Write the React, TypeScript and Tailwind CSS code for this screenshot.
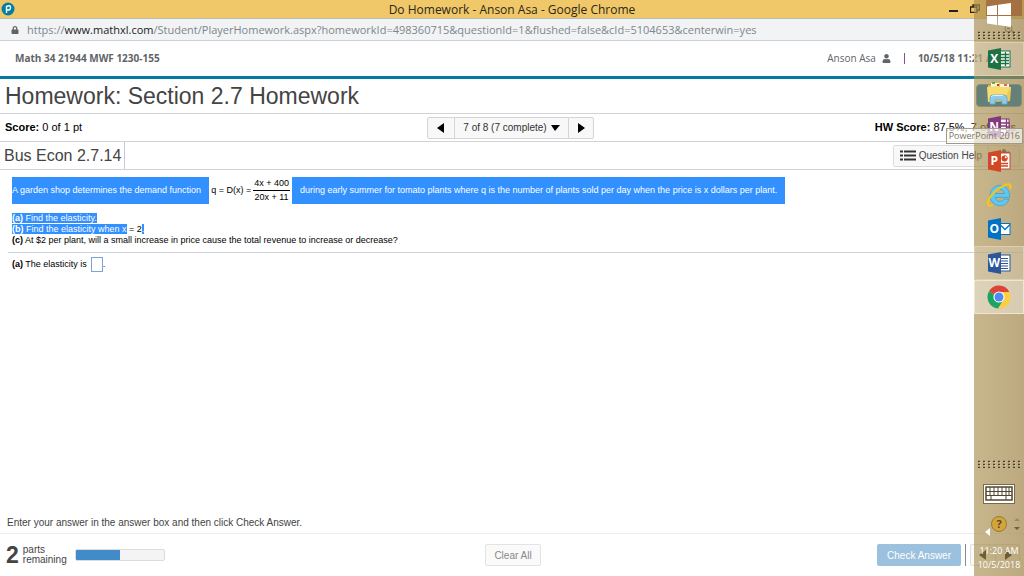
import type { ReactNode } from "react";
import { FaLock, FaUser, FaCog } from "react-icons/fa";

interface OfficeIconProps {
  letter: string;
  color: string;
  children: ReactNode;
}

// Folded cover on the left, a small sheet of the program's own on the right
const OfficeIcon = ({ letter, color, children }: OfficeIconProps) => (
  <svg width="24" height="24" viewBox="0 0 24 24">
    {children}
    <path d="M1 3.5 14 1v22L1 20.5z" fill={color} />
    <text
      x="7.2"
      y="16.2"
      textAnchor="middle"
      fontSize="12"
      fontWeight="bold"
      fontFamily="Open Sans, sans-serif"
      fill="#fff"
    >
      {letter}
    </text>
  </svg>
);

const ExcelIcon = () => (
  <OfficeIcon letter="X" color="#1e7145">
    <rect x="13" y="4" width="10" height="16" fill="#fff" stroke="#1e7145" />
    <path
      d="M14 7.5h8M14 10.5h8M14 13.5h8M14 16.5h8M18.5 5v14"
      stroke="#1e7145"
      strokeWidth="1.3"
    />
  </OfficeIcon>
);

const OneNoteIcon = () => (
  <OfficeIcon letter="N" color="#80397b">
    <rect x="13" y="4" width="9" height="16" fill="#fff" stroke="#80397b" />
    <path d="M14 8h5M14 11h5M14 14h5M19.5 4v16M20 8h3M20 12h3M20 16h3" stroke="#80397b" strokeWidth="1.4" />
  </OfficeIcon>
);

const PowerPointIcon = () => (
  <OfficeIcon letter="P" color="#d24726">
    <rect x="13" y="4" width="10" height="16" fill="#fff" stroke="#d24726" />
    <circle cx="17.5" cy="9.5" r="3" fill="#d24726" />
    <path d="M17.5 9.5V6.5a3 3 0 0 1 3 3z" fill="#fff" stroke="#d24726" strokeWidth=".8" />
    <path d="M14 14.5h7M14 17h7" stroke="#d24726" strokeWidth="1.3" />
  </OfficeIcon>
);

const OutlookIcon = () => (
  <OfficeIcon letter="O" color="#0072c6">
    <rect x="13" y="6.5" width="10" height="11" fill="#fff" stroke="#0072c6" />
    <path d="m14 8.5 4 4 5-5" fill="none" stroke="#0072c6" strokeWidth="1.3" />
  </OfficeIcon>
);

const WordIcon = () => (
  <OfficeIcon letter="W" color="#2b579a">
    <rect x="13" y="4" width="10" height="16" fill="#fff" stroke="#2b579a" />
    <path d="M14 7.5h7M14 10h7M14 12.5h7M14 15h7M14 17.5h7" stroke="#2b579a" strokeWidth="1.2" />
  </OfficeIcon>
);

const FolderIcon = () => (
  <svg width="28" height="26" viewBox="0 0 28 26">
    <path d="M3 5h3l1-3h8l1 2h8l1 17H3z" fill="#e2b94e" />
    <path d="M6 3h8v4H6zM15 4h9v4h-9z" fill="#fff5d8" />
    <path d="M7 3h3" stroke="#2f9e44" strokeWidth="1.5" />
    <path d="M12 5h2" stroke="#d9342b" strokeWidth="2" />
    <path d="M19 5h3" stroke="#d9342b" strokeWidth="1.5" />
    <path d="m2 7 11-1 2 1h11l-1 14-22 1z" fill="#f7dc6f" />
    <path d="M25 8v13l-7 1z" fill="#eec94f" />
    <path
      d="M5 24v-6q0-3 3-3h11q3 0 3 3v6h-5v-4h-7v4z"
      fill="#8fcbe9"
      stroke="#5fa9d3"
      strokeWidth=".8"
    />
    <path d="M6 17q1-1.500 3-1.500h9" stroke="#d8f0fb" fill="none" />
  </svg>
);

const ExplorerIcon = () => (
  <svg width="26" height="26" viewBox="0 0 26 26">
    <path
      fillRule="evenodd"
      d="M23.500 15.400H9.300c.3 2.500 2 3.900 4.600 3.900 1.900 0 3.300-.8 4.100-2.200h5.100C21.800 21.200 18.500 23.700 14 23.700A10 10 0 0 1 4 13.500 10 10 0 0 1 14 3.300c5.600 0 9.800 4.400 9.500 12.100zM9.400 11.500h9c-.4-2.600-2-4-4.500-4s-4.100 1.500-4.500 4z"
      fill="#5cc8f4"
      stroke="#2b95d0"
      strokeWidth=".6"
    />
    <path
      d="M24 7C25.500 3.500 24 1.500 20 2.800 13 5 4.500 12.500 2.300 18.500.8 22.500 2.500 25 7 22.600"
      fill="none"
      stroke="#f5c518"
      strokeWidth="2.200"
    />
  </svg>
);

const ChromeIcon = () => (
  <svg width="24" height="24" viewBox="0 0 24 24">
    <path d="M12 12 2 6.300A11.500 11.500 0 0 1 22.300 7H12z" fill="#db4437" />
    <path d="M2 6.300A11.500 11.500 0 0 0 11.200 23.500L17 14.500 12 12z" fill="#1da462" />
    <path d="M22.300 7A11.500 11.500 0 0 1 11.200 23.500L16.500 14.500 12 7z" fill="#ffcd40" />
    <circle cx="12" cy="12" r="5.600" fill="#fff" />
    <circle cx="12" cy="12" r="4.500" fill="#4c8bf5" />
  </svg>
);

const ListIcon = () => (
  <svg width="16" height="11" viewBox="0 0 16 11">
    <path d="M0 1.500h3M0 5.500h3M0 9.500h3M4 1.500h12M4 5.500h12M4 9.500h12" stroke="#333" strokeWidth="2.200" />
  </svg>
);

const Grip = () => (
  <svg width="44" height="8" viewBox="0 0 44 8" className="shrink-0">
    <path d="M1 1.500h43M1 4.500h43M1 7.500h43" stroke="#4b4028" strokeWidth="1.500" strokeDasharray="2 3" />
    <path d="M2.500 2.500h42M2.500 5.500h42" stroke="#eee3c4" strokeWidth="1" strokeDasharray="1 4" />
  </svg>
);

const Triangle = ({ dir }: { dir: "left" | "right" | "down" }) => {
  const paths = { left: "M8 0v10L1 5z", right: "M2 0v10l7-5z", down: "M1 2h9L5 8z" };
  return (
    <svg width="10" height="10" viewBox="0 0 10 10" className="shrink-0">
      <path d={paths[dir]} fill="#000" />
    </svg>
  );
};

const taskbarItems = [
  { name: "Excel", icon: <ExcelIcon />, style: "border border-[#ddd0ae] bg-white/20" },
  { name: "File Explorer", icon: <FolderIcon />, style: "" },
  { name: "OneNote", icon: <OneNoteIcon />, style: "" },
  { name: "PowerPoint", icon: <PowerPointIcon />, style: "" },
  { name: "Internet Explorer", icon: <ExplorerIcon />, style: "" },
  { name: "Outlook", icon: <OutlookIcon />, style: "" },
  { name: "Word", icon: <WordIcon />, style: "border border-[#ddd0ae] bg-white/20" },
  { name: "Chrome", icon: <ChromeIcon />, style: "border border-[#efe6cd] bg-white/40" },
];

const Taskbar = () => (
  <aside className="absolute inset-y-0 right-0 z-10 flex w-[50px] flex-col items-center bg-linear-to-r from-[#aa8f50]/65 to-[#a08448]/70 font-['Open_Sans',sans-serif]">
    <button aria-label="Start" className="flex h-7 w-full justify-center pt-[3px]">
      <svg width="24" height="24" viewBox="0 0 24 24">
        <path d="M0 3.500 10 2v10H0zM11 1.800 24 0v12H11zM0 13h10v9L0 20.500zM11 13h13v11l-13-2z" fill="#fff" />
      </svg>
    </button>
    <div className="flex h-[14px] items-center">
      <Grip />
    </div>
    {taskbarItems.map((item) => (
      <button
        key={item.name}
        aria-label={item.name}
        className={`relative flex h-[34px] w-full shrink-0 items-center justify-center ${item.style}`}
      >
        {item.name === "File Explorer" && (
          <span className="absolute inset-x-[2px] top-2 bottom-[3px] rounded-sm border border-[#8b8f70] bg-[#648078]" />
        )}
        <span className="relative">{item.icon}</span>
      </button>
    ))}
    <span className="absolute top-32 right-px border border-[#a09a88] bg-white/65 px-[2px] text-[9px] leading-[14px] whitespace-nowrap text-[#7b7666]">
      PowerPoint 2016
    </span>

    <div className="mt-auto flex w-full flex-col items-center">
      <Grip />
      <button aria-label="Touch keyboard" className="mt-4">
        <svg width="32" height="20" viewBox="0 0 32 20">
          <rect x=".5" y=".5" width="31" height="19" fill="#fff" stroke="#776b4c" />
          <rect x="3" y="3" width="26" height="13" fill="#fff" stroke="#51472f" strokeWidth="1.500" />
          <path d="M3 7.500h26M3 11.500h26M7 3v9M11 3v9M15 3v9M19 3v9M23 3v9M26 3v9M8 12v4M23 12v4" stroke="#51472f" />
        </svg>
      </button>
      <div className="mt-3 flex w-full items-center gap-[6px] pl-[17px]">
        <button
          aria-label="Help"
          className="size-4 rounded-full border border-[#9b7930] bg-[#d3a53c] text-[11px] leading-[14px] font-bold text-[#5d4a22]"
        >
          ?
        </button>
        <svg width="8" height="16" viewBox="0 0 8 16">
          <path d="M1 5h6L4 2z" fill="#9a8b66" />
          <path d="M1 11h6l-3 3z" fill="#6e5f3c" />
        </svg>
      </div>
      <button aria-label="Show hidden icons" className="-mt-1 self-start pl-[11px]">
        <svg width="5" height="8" viewBox="0 0 5 8">
          <path d="M5 0v8L0 4z" fill="#fff" />
        </svg>
      </button>
      <p className="pt-2 pb-1 text-center text-[9px] leading-[14px] whitespace-nowrap text-white">
        11:20 AM
        <br />
        10/5/2018
      </p>
    </div>
  </aside>
);

const Browser = () => (
  <header className="font-['Open_Sans',sans-serif]">
    <div className="grid h-[19px] grid-cols-[1fr_auto_1fr] items-center border-b border-[#b9bcb4] bg-[#f0c869]">
      <svg width="14" height="14" viewBox="0 0 14 14" className="ml-px">
        <circle cx="7" cy="7" r="6.500" fill="#007fa3" />
        <path d="M5.500 11V4.500q4-2 4 1T6 8" fill="none" stroke="#fff" strokeWidth="1.400" />
      </svg>
      <h1 className="pt-px text-[12px] leading-4 text-[#2c2718]">Do Homework - Anson Asa - Google Chrome</h1>
      <div className="flex h-full items-start justify-end">
        <button aria-label="Minimize" className="mt-[10px] mr-3 h-[2px] w-[9px] bg-[#222]" />
        <button aria-label="Restore" className="mt-1 mr-[6px]">
          <svg width="10" height="9" viewBox="0 0 10 9">
            <path d="M3 3V1h6.500v5H7M.5 3H7v5.500H.5z" fill="none" stroke="#222" strokeWidth="1.300" />
          </svg>
        </button>
        <button aria-label="Close" className="mr-[2px] h-4 w-9 bg-[#a8402f]" />
      </div>
    </div>
    <div className="flex h-[22px] items-center border-b border-[#d0d0d2] bg-[#f1f3f5] pl-[11px] text-[11px] text-[#80868b]">
      <FaLock size={8} color="#5f6368" />
      <p className="ml-2 flex-1 pt-px">
        https://<span className="text-[#202124]">www.mathxl.com</span>
        /Student/PlayerHomework.aspx?homeworkId=498360715&amp;questionId=1&amp;flushed=false&amp;cId=5104653&amp;centerwin=yes
      </p>
      <svg width="12" height="12" viewBox="0 0 12 12" className="mr-2">
        <path d="M3 4.500h3M8 7l3 4" stroke="#5f6368" strokeWidth="1.300" />
        <circle cx="4.500" cy="4.500" r="3.500" fill="none" stroke="#5f6368" />
      </svg>
    </div>
    <div className="flex h-[38px] items-center border-b-[3px] border-[#047a9c] pr-[22px] pl-[15px] text-[10px] text-[#5f6468]">
      <p className="font-bold">Math 34 21944 MWF 1230-155</p>
      <p className="ml-auto">Anson Asa</p>
      <FaUser size={9} className="ml-[6px]" />
      <span className="mx-[13px] h-[11px] w-px bg-[#8d4c9e]" />
      <p className="font-bold">10/5/18 11:21 AM</p>
    </div>
  </header>
);

const Question = () => (
  <main className="flex-1 text-[9px] leading-[11px] text-black">
    <div className="flex items-center px-3 pt-[7px]">
      <p className="flex h-[27px] items-center bg-[#3390ff] pr-2 whitespace-nowrap text-white">
        A garden shop determines the demand function
      </p>
      <p className="px-[2px] whitespace-nowrap">q = D(x) =</p>
      <p className="flex flex-col text-center whitespace-nowrap">
        <span className="border-b border-black px-px pb-px">4x + 400</span>
        <span className="pt-px">20x + 11</span>
      </p>
      <p className="ml-[2px] flex h-[27px] items-center bg-[#3390ff] px-2 whitespace-nowrap text-white">
        during early summer for tomato plants where q is the number of plants sold per day when the price is x dollars
        per plant.
      </p>
    </div>
    <div className="px-3 pt-[9px] pb-[6px]">
      <p>
        <span className="bg-[#3390ff] text-white">
          <b>(a)</b> Find the elasticity.
        </span>
      </p>
      <p>
        <span className="bg-[#3390ff] text-white">
          <b>(b)</b> Find the elasticity when x
        </span>{" "}
        = 2<span className="bg-[#3390ff] text-white">.</span>
      </p>
      <p>
        <b>(c)</b> At $2 per plant, will a small increase in price cause the total revenue to increase or decrease?
      </p>
    </div>
    <div className="ml-2 flex items-center border-t border-[#cfd2dc] px-1 pt-1">
      <label htmlFor="elasticity">
        <b>(a)</b> The elasticity is
      </label>
      <input id="elasticity" className="ml-1 h-[15px] w-3 border border-[#7da2e0] bg-white outline-none" />
      <span>.</span>
    </div>
  </main>
);

const App = () => {
  return (
    <div className="relative flex min-h-screen flex-col overflow-hidden bg-white font-['Liberation_Sans',Arial,sans-serif]">
      <Browser />
      <h2 className="h-[35px] border-b border-[#d0d3da] pl-[5px] text-[23px] leading-[34px] text-[#444]">
        Homework: Section 2.7 Homework
      </h2>
      <section className="grid h-7 grid-cols-[1fr_auto_1fr] items-center border-b border-[#d0d3da] pr-2 pl-[5px] text-[11px] text-black">
        <p>
          <b>Score:</b> 0 of 1 pt
        </p>
        <nav className="flex h-[22px] rounded-xs border border-[#d5d5d5] bg-[#f8f8f8] text-[10px] text-[#333]">
          <button aria-label="Previous question" className="flex w-[26px] items-center justify-center">
            <Triangle dir="left" />
          </button>
          <button className="flex items-center gap-[3px] border-x border-[#d5d5d5] px-2">
            7 of 8 (7 complete) <Triangle dir="down" />
          </button>
          <button aria-label="Next question" className="flex w-6 items-center justify-center">
            <Triangle dir="right" />
          </button>
        </nav>
        <p className="text-right">
          <b>HW Score:</b> 87.5%, 7 of 8 pts
        </p>
      </section>
      <section className="flex h-7 items-center justify-between border-b border-[#d0d3da] px-1">
        <h3 className="h-full border-r border-[#c5cad8] pr-[3px] text-[16px] leading-[27px] text-[#444]">
          Bus Econ 2.7.14
        </h3>
        <div className="flex h-[22px] rounded-xs border border-[#dcdcdc] bg-[#f8f8f8] text-[10px] text-[#444]">
          <button className="flex items-center gap-[3px] px-[6px]">
            <ListIcon /> Question Help
          </button>
          <button aria-label="Settings" className="flex items-center border-l border-[#dcdcdc] px-2">
            <FaCog size={14} />
          </button>
        </div>
      </section>
      <Question />
      <footer className="text-[#444]">
        <p className="border-b border-[#ededed] pb-[3px] pl-[7px] text-[10px] leading-[14px]">
          Enter your answer in the answer box and then click Check Answer.
        </p>
        <div className="grid h-[42px] grid-cols-[1fr_auto_1fr] items-center pr-1 pl-[6px]">
          <div className="flex items-center">
            <b className="text-[23px] leading-6">2</b>
            <p className="ml-1 text-[10px] leading-[10px]">
              parts
              <br />
              remaining
            </p>
            <div className="ml-2 h-3 w-[90px] overflow-hidden rounded-xs border border-[#dcdcdc] bg-[#f4f4f4]">
              <div className="h-full w-1/2 bg-[#428bca]" />
            </div>
          </div>
          <button className="h-[22px] rounded-xs border border-[#e3e3e3] bg-[#fafafa] px-2 text-[10px] text-[#888]">
            Clear All
          </button>
          <div className="flex items-center justify-end">
            <button className="h-[22px] rounded-xs bg-[#9bc1de] px-[10px] text-[10px] text-white">Check Answer</button>
            <span className="mx-1 h-[22px] w-px bg-[#888]" />
            <div className="flex h-[22px] rounded-xs border border-[#e0e0e0] bg-[#fafafa]">
              <button aria-label="Previous part" className="flex w-6 items-center justify-center">
                <Triangle dir="left" />
              </button>
              <button aria-label="Next part" className="flex w-6 items-center justify-center border-l border-[#e0e0e0]">
                <Triangle dir="right" />
              </button>
            </div>
          </div>
        </div>
      </footer>
      <Taskbar />
    </div>
  );
};

export default App;
